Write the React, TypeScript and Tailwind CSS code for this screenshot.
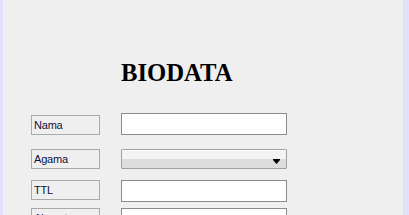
export default function App() {
  const label = 'w-[69px] h-[20px] border border-[#a9a9a9] flex items-center pl-[2px] text-[11px] tracking-[-0.2px] text-[#10103a] leading-none';
  const input = 'w-[166px] h-[22px] border border-[#8a8a8f] bg-white';

  return (
    <div className="flex w-[409px] h-[215px] overflow-hidden bg-[#efefef]" style={{ fontFamily: '"Liberation Sans", Arial, sans-serif' }}>
      <div className="w-[3px] shrink-0 bg-[#e1e1ff]" />
      <div className="flex-1 flex flex-col">
        <h1
          className="mt-[59px] ml-[118px] text-[24.7px] leading-[28px] font-bold text-black"
          style={{ fontFamily: '"Liberation Serif", "Times New Roman", serif' }}
        >
          BIODATA
        </h1>

        <div className="mt-[26px] flex ml-[28px]">
          <div className={`${label} mt-[2px]`}>Nama</div>
          <div className={`${input} ml-[21px]`} />
        </div>

        <div className="mt-[14px] flex ml-[28px]">
          <div className={label}>Agama</div>
          <div className="ml-[21px] w-[166px] h-[20px] border border-[#a0a0a6] rounded-[1px] flex flex-col relative">
            <div className="h-[9px] bg-[#f3f3f3] border-t border-white" />
            <div className="flex-1 bg-[#dcdcdc]" />
            <svg className="absolute right-[6px] top-[9px]" width="7" height="5" viewBox="0 0 7 5">
              <path d="M0 0H7V1H0Z M0 1H7L3.5 5Z" fill="#000" />
            </svg>
          </div>
        </div>

        <div className="mt-[11px] flex ml-[28px]">
          <div className={label}>TTL</div>
          <div className={`${input} ml-[21px]`} />
        </div>

        <div className="mt-[6px] flex ml-[28px]">
          <div className={label}>Alamat</div>
          <div className={`${input} ml-[21px]`} />
        </div>
      </div>
      <div className="w-[6px] shrink-0 bg-[#e1e1ff]" />
    </div>
  );
}
